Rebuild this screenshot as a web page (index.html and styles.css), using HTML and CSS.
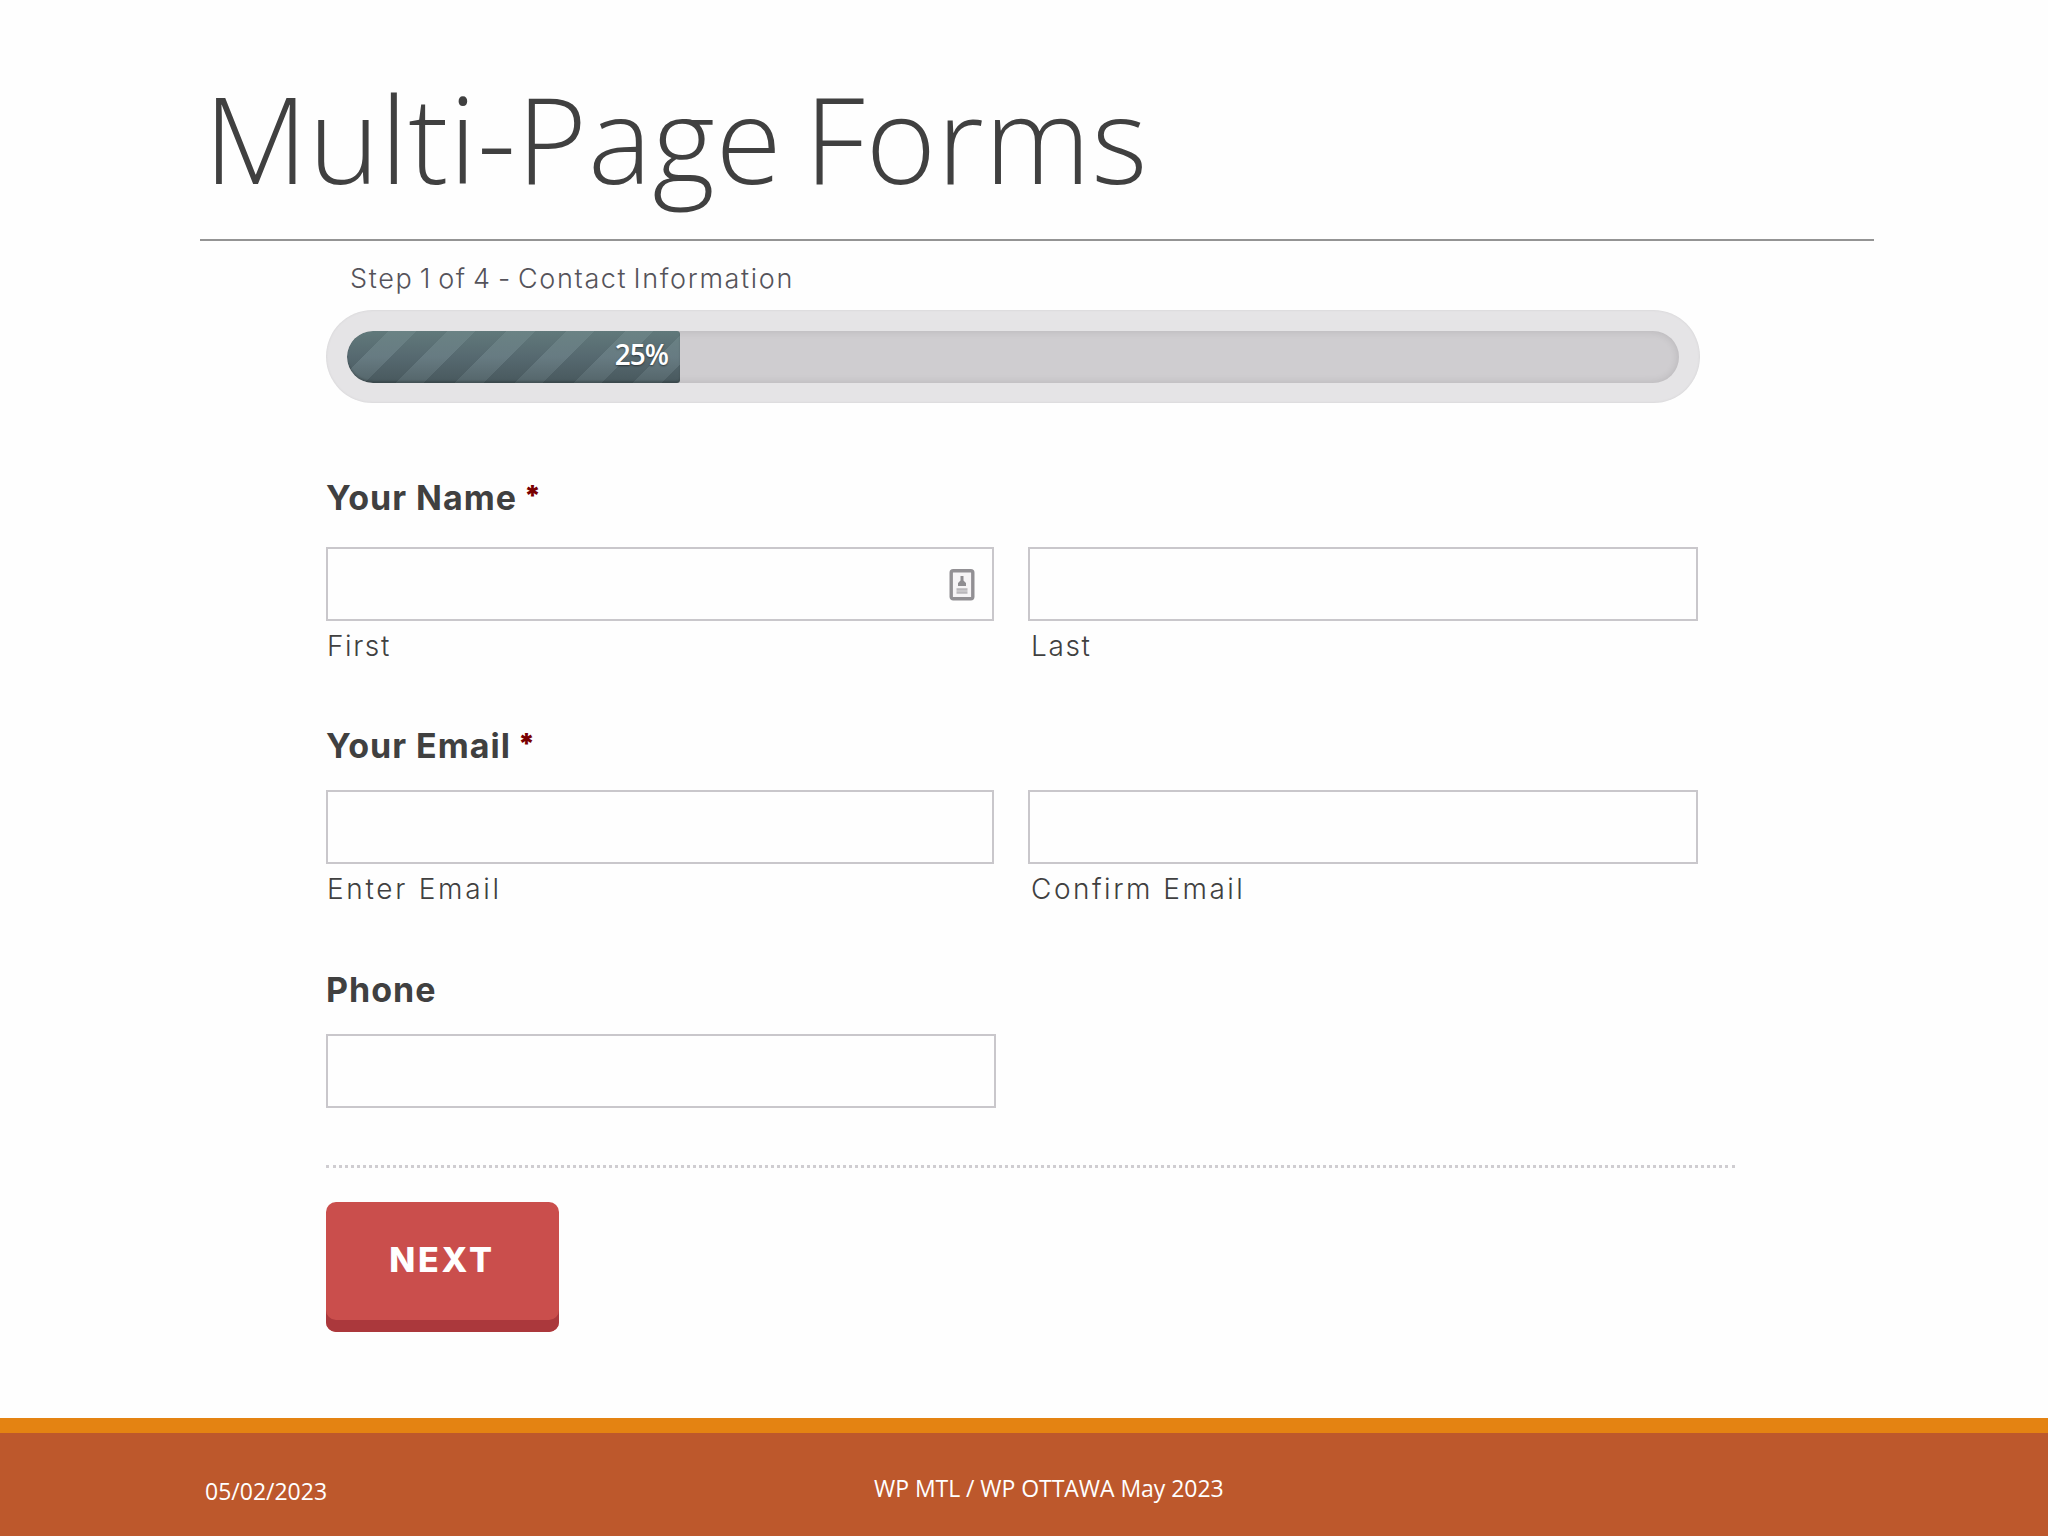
FILE: index.html
```html
<!DOCTYPE html>
<html lang="en">
<head>
    <meta charset="UTF-8">
    <meta name="viewport" content="width=device-width, initial-scale=1.0">
    <title>Multi-Page Forms</title>
    <link rel="stylesheet" href="styles.css">
</head>
<body>
    <header class="slide-header">
        <h1>Multi-Page Forms</h1>
    </header>

    <form class="form">
        <p class="step">Step 1 of 4 - Contact Information</p>
        <div class="progress">
            <div class="progress-track">
                <div class="progress-fill" style="width: 25%;"><span>25%</span></div>
            </div>
        </div>

        <div class="field name-field">
            <label class="field-label" for="first">Your Name <span class="required">*</span></label>
            <div class="field-row">
                <div class="field-col">
                    <div class="input-box">
                        <input type="text" id="first">
                        <svg class="contact-icon" viewBox="0 0 26 34" width="26" height="34">
                            <rect x="2.2" y="2.8" width="21.6" height="28" rx="2" fill="#f6f4f6" stroke="#929094" stroke-width="3.4"/>
                            <path d="M11.5 8h3v4.500l2.500 2.500v3H9v-3l2.500-2.500z" fill="#8f8d91"/>
                            <path d="M7.500 21.500h11M7.500 24.500h11" stroke="#b9b7bb" stroke-width="2.400"/>
                        </svg>
                    </div>
                    <label class="sub-label short" for="first">First</label>
                </div>
                <div class="field-col">
                    <div class="input-box"><input type="text" id="last"></div>
                    <label class="sub-label short" for="last">Last</label>
                </div>
            </div>
        </div>

        <div class="field">
            <label class="field-label" for="email">Your Email <span class="required">*</span></label>
            <div class="field-row">
                <div class="field-col">
                    <div class="input-box"><input type="text" id="email"></div>
                    <label class="sub-label" for="email">Enter Email</label>
                </div>
                <div class="field-col">
                    <div class="input-box"><input type="text" id="confirm"></div>
                    <label class="sub-label" for="confirm">Confirm Email</label>
                </div>
            </div>
        </div>

        <div class="field phone-field">
            <label class="field-label" for="phone">Phone</label>
            <div class="input-box phone-box"><input type="text" id="phone"></div>
        </div>

        <div class="form-footer">
            <button type="button" class="next-btn">NEXT</button>
        </div>
    </form>

    <footer class="slide-footer">
        <span class="date">05/02/2023</span>
        <span class="event">WP MTL / WP OTTAWA May 2023</span>
    </footer>
</body>
</html>
```
FILE: styles.css
```css
* {
    box-sizing: border-box;
}

body {
    margin: 0;
    height: 1536px;
    display: flex;
    flex-direction: column;
    background: #fefefe;
    font-family: Inter, sans-serif;
    color: #404040;
    overflow: hidden;
}

/* Slide title */
.slide-header {
    width: 1674px;
    height: 241px;
    margin-left: 200px;
    padding: 58px 0 0 4px;
    border-bottom: 2px solid #949494;
}

h1 {
    margin: 0;
    font: 360 120px/160px "Open Sans", sans-serif;
    letter-spacing: 0.9px;
    word-spacing: -10px;
    white-space: nowrap;
}

/* Form */
.form {
    width: 1409px;
    margin-left: 326px;
    padding-top: 18px;
}

.step {
    margin: 0 0 11px;
    padding-left: 24px;
    font-size: 27px;
    font-weight: 300;
    line-height: 40px;
    letter-spacing: 1.65px;
    word-spacing: -3px;
    color: #55535a;
}

/* Progress bar */
.progress {
    width: 1374px;
    height: 93px;
    padding: 21px;
    border-radius: 47px;
    background: #e5e4e6;
    box-shadow: inset 0 0 3px rgba(0, 0, 0, 0.08);
}

.progress-track {
    height: 52px;
    border-radius: 26px;
    background: #cfcdd0;
    box-shadow: inset 0 0 8px rgba(0, 0, 0, 0.12);
    overflow: hidden;
}

.progress-fill {
    height: 100%;
    padding-right: 12px;
    border-radius: 26px 3px 3px 26px;
    text-align: right;
    color: #fff;
    font: 600 28px/47px "Open Sans", sans-serif;
    letter-spacing: -1px;
    text-shadow: 0 1px 2px rgba(0, 0, 0, 0.5);
    background:
        linear-gradient(rgba(110, 140, 135, 0.45), rgba(70, 90, 95, 0) 50%, rgba(40, 50, 50, 0.3)),
        repeating-linear-gradient(135deg, #677b82 0 7px, #566970 7px 29px, #677b82 29px 42px);
    box-shadow: inset 0 -2px 2px rgba(0, 0, 0, 0.2);
}

/* Fields */
.field {
    margin-top: 62px;
}

.name-field {
    margin-top: 75px;
}

.phone-field {
    margin-top: 63px;
}

.field-label {
    display: block;
    height: 40px;
    margin-bottom: 24px;
    font-size: 34px;
    font-weight: 700;
    line-height: 40px;
    letter-spacing: 1px;
}

.name-field .field-label {
    margin-bottom: 29px;
}

.required {
    margin-left: -2px;
    color: #790000;
    font-size: 28px;
    font-weight: 900;
    line-height: 1;
    vertical-align: 4px;
}

.field-row {
    display: grid;
    grid-template-columns: 668px 670px;
    gap: 34px;
}

.input-box {
    position: relative;
    height: 74px;
    border: 2px solid #c9c7cb;
}

.input-box input {
    width: 100%;
    height: 100%;
    border: none;
    outline: none;
    background: transparent;
    font-size: 26px;
}

.phone-box {
    width: 670px;
}

.contact-icon {
    position: absolute;
    top: 19px;
    right: 17px;
}

.sub-label {
    display: block;
    margin-top: 7px;
    padding-left: 1px;
    font-size: 28px;
    font-weight: 350;
    line-height: 36px;
    letter-spacing: 2.7px;
}

.field-col + .field-col .sub-label {
    padding-left: 3px;
    letter-spacing: 2.5px;
}

.field-col .sub-label.short,
.field-col + .field-col .sub-label.short {
    letter-spacing: 1.6px;
}

/* Button row */
.form-footer {
    margin-top: 57px;
    padding-top: 34px;
    border-top: 3px dotted #cfcdd1;
}

.next-btn {
    display: block;
    width: 233px;
    height: 130px;
    padding: 0 1px 15px 0;
    border: none;
    border-radius: 10px;
    background: #ca4e4c;
    box-shadow: inset 0 -12px 0 #ab383c;
    color: #fff;
    font: 800 34px Inter, sans-serif;
    letter-spacing: 2.8px;
}

/* Slide footer */
.slide-footer {
    display: flex;
    flex-shrink: 0;
    height: 118px;
    margin-top: auto;
    padding-left: 205px;
    border-top: 15px solid #e48312;
    background: #bd582c;
    color: #fff;
    font: 400 23px/32px "Open Sans", sans-serif;
}

.date {
    width: 669px;
    padding-top: 42px;
}

.event {
    padding-top: 39px;
    letter-spacing: -0.05px;
}
```
